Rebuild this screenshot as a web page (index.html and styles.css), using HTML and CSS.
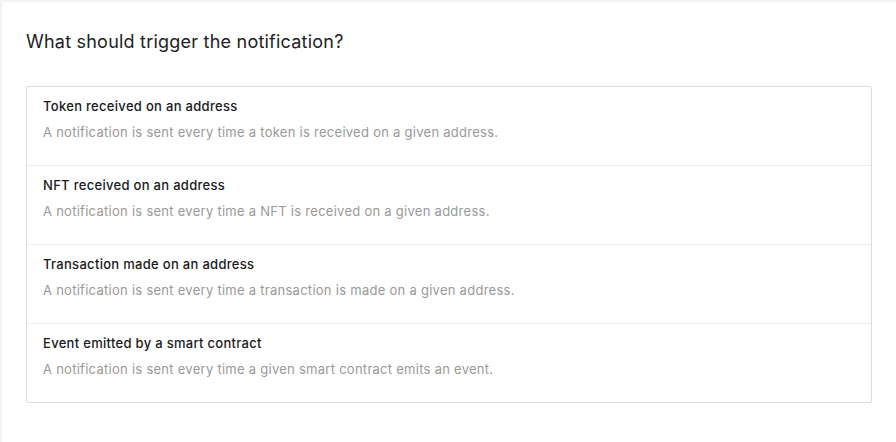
FILE: index.html
```html
<!DOCTYPE html>
<html>
<head>
<meta charset="utf-8">
<link rel="stylesheet" href="styles.css">
</head>
<body>
<div class="card">
  <h2 class="heading">What should trigger the notification?</h2>
  <div class="list">
    <div class="item">
      <div class="title">Token received on an address</div>
      <div class="desc">A notification is sent every time a token is received on a given address.</div>
    </div>
    <div class="item">
      <div class="title">NFT received on an address</div>
      <div class="desc">A notification is sent every time a NFT is received on a given address.</div>
    </div>
    <div class="item">
      <div class="title">Transaction made on an address</div>
      <div class="desc">A notification is sent every time a transaction is made on a given address.</div>
    </div>
    <div class="item">
      <div class="title">Event emitted by a smart contract</div>
      <div class="desc">A notification is sent every time a given smart contract emits an event.</div>
    </div>
  </div>
</div>
</body>
</html>
```
FILE: styles.css
```css
html, body {
  margin: 0;
  padding: 0;
  background: #f4f4f6;
  font-family: Inter, "Noto Sans", sans-serif;
  height: 100%;
  overflow: hidden;
}
.card {
  margin: 2px 0 0 2px;
  background: #fff;
  padding: 28px 24px 40px 24px;
  min-height: 440px;
  box-sizing: border-box;
}
.heading {
  margin: 0 0 32px 0;
  font-size: 18px;
  line-height: 24px;
  font-weight: 400;
  letter-spacing: 0.22px;
  color: #222;
}
.list {
  border: 1px solid #dcdcdc;
  border-radius: 2px;
}
.item {
  padding: 10px 16px 0 16px;
  box-sizing: content-box;
  height: 68px;
  border-top: 1px solid #ececec;
}
.item:first-child {
  border-top: none;
}
.title {
  font-size: 13px;
  line-height: 18px;
  color: #1a1a1a;
  font-weight: 450;
  letter-spacing: 0.3px;
}
.desc {
  margin-top: 8px;
  font-size: 13px;
  line-height: 18px;
  letter-spacing: 0.27px;
  color: #999;
}
```
